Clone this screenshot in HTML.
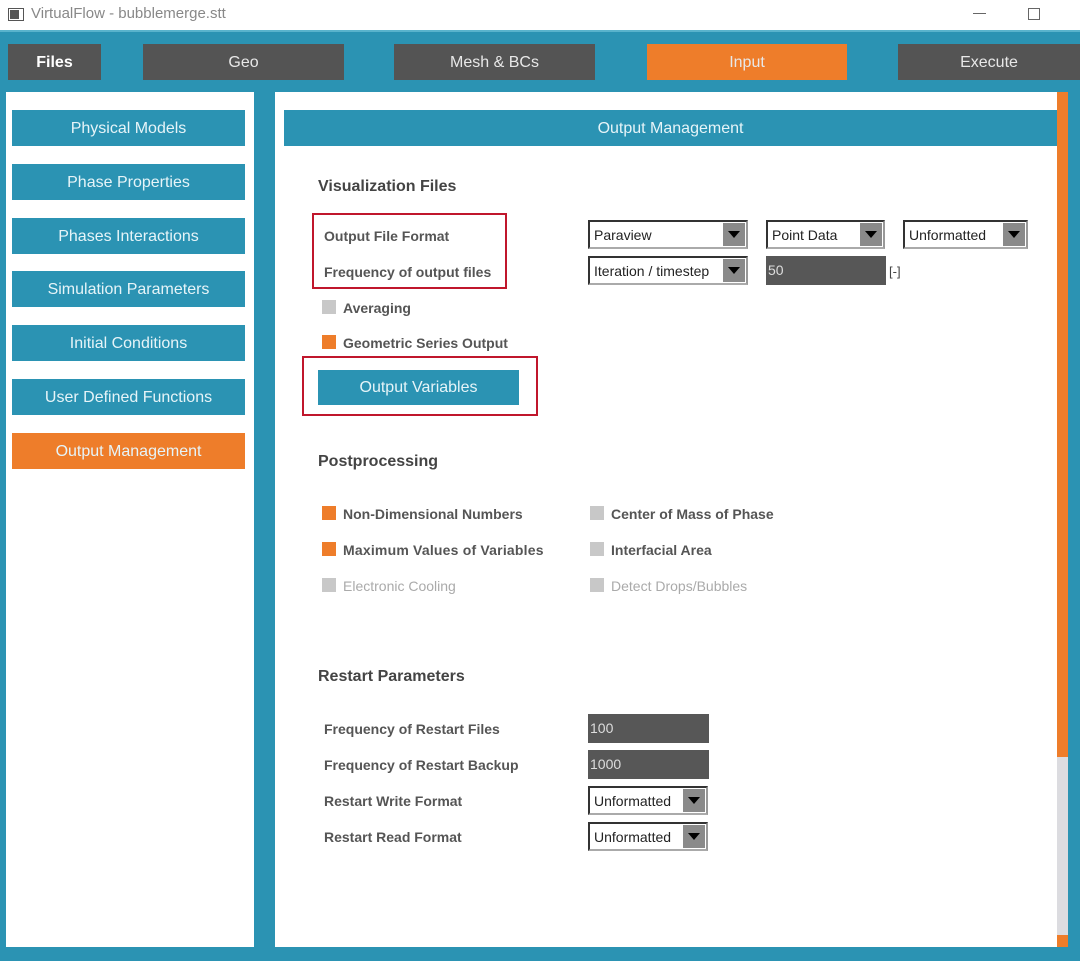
<!DOCTYPE html>
<html><head><meta charset="utf-8"><style>
*{margin:0;padding:0;box-sizing:border-box}
body{width:1080px;height:961px;position:relative;overflow:hidden;background:#2b93b3;font-family:"Liberation Sans",Arial,sans-serif}
.a{position:absolute}
.title{left:0;top:0;width:1080px;height:32px;background:#fff;border-bottom:2px solid #59b3cc}
.tab{top:44px;height:36px;background:#545454;color:#e8e8e8;font-size:16px;text-align:center;line-height:38px}
.side{background:#2b93b3;color:#e6f4f8;font-size:16px;text-align:center;line-height:38px;height:36px;left:12px;width:233px}
.lbl{font-size:14px;font-weight:bold;color:#555}
.h{font-size:16px;font-weight:bold;color:#444}
.cb{width:14px;height:14px;background:#c8c8c8}
.or{background:#ee7d2a}
.dd{height:29px;border:2px solid #333;border-right-color:#999;border-bottom-color:#aaa;background:#fff;font-size:14px;color:#222;padding-left:4px;line-height:27px}
.dd i{position:absolute;right:1px;top:1px;width:22px;height:23px;background:#8a8a8a}
.dd i:after{content:"";position:absolute;left:5px;top:8px;border-left:6px solid transparent;border-right:6px solid transparent;border-top:7px solid #000}
.in{background:#575757;color:#ddd;font-size:14px;height:29px;line-height:29px;padding-left:2px}
.red{border:2px solid #c0172c}
</style></head><body>
<div class="a title"></div>
<div class="a" style="left:8px;top:8px;width:16px;height:13px;border:1px solid #555;background:#fff"><div style="position:absolute;left:1px;top:1px;width:9px;height:9px;background:#555"></div></div>
<div class="a" style="left:31px;top:5px;font-size:15px;color:#888">VirtualFlow - bubblemerge.stt</div>
<div class="a" style="left:973px;top:13px;width:13px;height:1px;background:#666"></div>
<div class="a" style="left:1028px;top:8px;width:12px;height:12px;border:1px solid #666"></div>

<div class="a tab" style="left:8px;width:93px;font-weight:bold;color:#fff">Files</div>
<div class="a tab" style="left:143px;width:201px">Geo</div>
<div class="a tab" style="left:394px;width:201px">Mesh &amp; BCs</div>
<div class="a tab" style="left:647px;width:200px;background:#ee7d2a">Input</div>
<div class="a tab" style="left:898px;width:182px">Execute</div>

<div class="a" style="left:6px;top:92px;width:248px;height:855px;background:#fff"></div>
<div class="a side" style="top:110px">Physical Models</div>
<div class="a side" style="top:164px">Phase Properties</div>
<div class="a side" style="top:218px">Phases Interactions</div>
<div class="a side" style="top:271px">Simulation Parameters</div>
<div class="a side" style="top:325px">Initial Conditions</div>
<div class="a side" style="top:379px">User Defined Functions</div>
<div class="a side" style="top:433px;background:#ee7d2a">Output Management</div>

<div class="a" style="left:275px;top:92px;width:793px;height:855px;background:#fff"></div>
<div class="a" style="left:284px;top:110px;width:773px;height:36px;background:#2b93b3;color:#e6f4f8;font-size:16px;text-align:center;line-height:38px">Output Management</div>
<div class="a" style="left:1057px;top:92px;width:11px;height:665px;background:#ee7d2a"></div>
<div class="a" style="left:1057px;top:757px;width:11px;height:178px;background:#dcdce0"></div>
<div class="a" style="left:1057px;top:935px;width:11px;height:12px;background:#ee7d2a"></div>

<div class="a h" style="left:318px;top:178px">Visualization Files</div>
<div class="a red" style="left:312px;top:213px;width:195px;height:76px"></div>
<div class="a lbl" style="left:324px;top:228px">Output File Format</div>
<div class="a lbl" style="left:324px;top:264px">Frequency of output files</div>
<div class="a dd" style="left:588px;top:220px;width:160px">Paraview<i></i></div>
<div class="a dd" style="left:766px;top:220px;width:119px">Point Data<i></i></div>
<div class="a dd" style="left:903px;top:220px;width:125px">Unformatted<i></i></div>
<div class="a dd" style="left:588px;top:256px;width:160px">Iteration / timestep<i></i></div>
<div class="a in" style="left:766px;top:256px;width:120px">50</div>
<div class="a" style="left:889px;top:264px;font-size:13px;color:#444">[-]</div>
<div class="a cb" style="left:322px;top:300px"></div><div class="a lbl" style="left:343px;top:300px">Averaging</div>
<div class="a cb or" style="left:322px;top:335px"></div><div class="a lbl" style="left:343px;top:335px">Geometric Series Output</div>
<div class="a red" style="left:302px;top:356px;width:236px;height:60px"></div>
<div class="a" style="left:318px;top:370px;width:201px;height:35px;background:#2b93b3;color:#e6f4f8;font-size:16px;text-align:center;line-height:36px">Output Variables</div>

<div class="a h" style="left:318px;top:453px">Postprocessing</div>
<div class="a cb or" style="left:322px;top:506px"></div><div class="a lbl" style="left:343px;top:506px">Non-Dimensional Numbers</div>
<div class="a cb or" style="left:322px;top:542px"></div><div class="a lbl" style="left:343px;top:542px;letter-spacing:0.2px">Maximum Values of Variables</div>
<div class="a cb" style="left:322px;top:578px"></div><div class="a lbl" style="left:343px;top:578px;color:#aaa;font-weight:normal">Electronic Cooling</div>
<div class="a cb" style="left:590px;top:506px"></div><div class="a lbl" style="left:611px;top:506px">Center of Mass of Phase</div>
<div class="a cb" style="left:590px;top:542px"></div><div class="a lbl" style="left:611px;top:542px">Interfacial Area</div>
<div class="a cb" style="left:590px;top:578px"></div><div class="a lbl" style="left:611px;top:578px;color:#aaa;font-weight:normal">Detect Drops/Bubbles</div>

<div class="a h" style="left:318px;top:668px">Restart Parameters</div>
<div class="a lbl" style="left:324px;top:721px">Frequency of Restart Files</div>
<div class="a lbl" style="left:324px;top:757px">Frequency of Restart Backup</div>
<div class="a lbl" style="left:324px;top:793px">Restart Write Format</div>
<div class="a lbl" style="left:324px;top:829px">Restart Read Format</div>
<div class="a in" style="left:588px;top:714px;width:121px">100</div>
<div class="a in" style="left:588px;top:750px;width:121px">1000</div>
<div class="a dd" style="left:588px;top:786px;width:120px">Unformatted<i></i></div>
<div class="a dd" style="left:588px;top:822px;width:120px">Unformatted<i></i></div>
</body></html>
